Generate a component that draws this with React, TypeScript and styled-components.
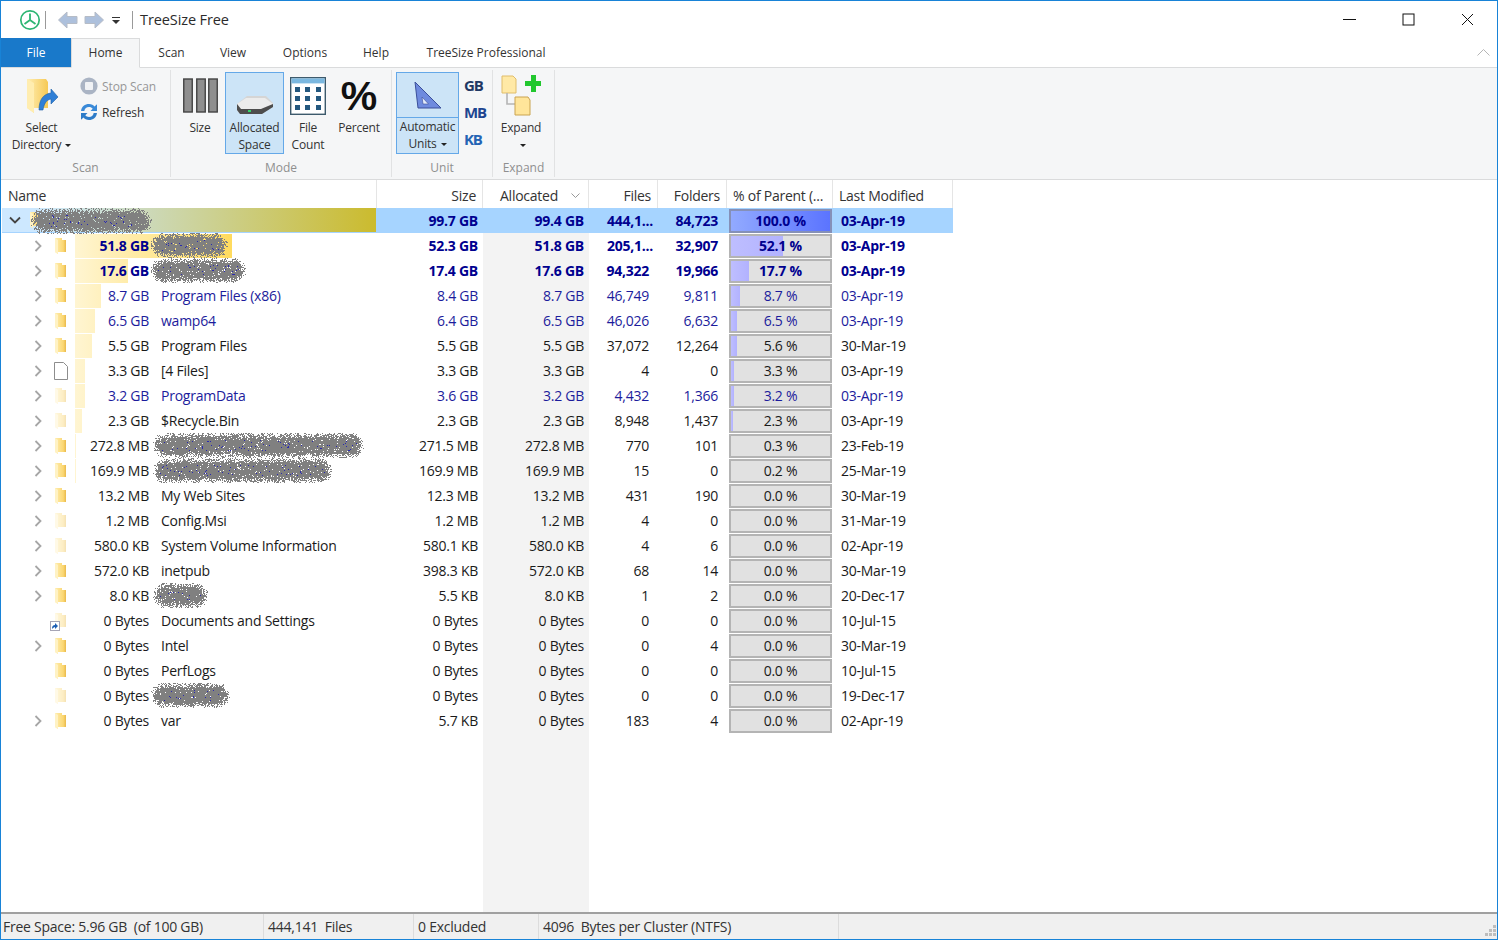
import * as React from 'react';
import styled, { createGlobalStyle } from 'styled-components';

const FONT = `"Open Sans", "Noto Sans", "Liberation Sans", sans-serif`;
const COLS = '375px 106px 106px 69px 69px 106px 120px';

interface IRow {
  size: string;
  name?: string;
  apparent: string;
  allocated: string;
  files: string;
  folders: string;
  pct: number;
  date: string;
  bar: number;
  bold?: boolean;
  recent?: boolean;
  faded?: boolean;
  noExpand?: boolean;
  kind?: 'folder' | 'file' | 'link';
  scribble?: [number, number];
}

const rows: IRow[] = [
  { size: '51.8 GB', apparent: '52.3 GB', allocated: '51.8 GB', files: '205,1...', folders: '32,907', pct: 52.1, date: '03-Apr-19', bar: 157, bold: true, recent: true, scribble: [148, 78] },
  { size: '17.6 GB', apparent: '17.4 GB', allocated: '17.6 GB', files: '94,322', folders: '19,966', pct: 17.7, date: '03-Apr-19', bar: 53, bold: true, recent: true, scribble: [148, 96] },
  { size: '8.7 GB', name: 'Program Files (x86)', apparent: '8.4 GB', allocated: '8.7 GB', files: '46,749', folders: '9,811', pct: 8.7, date: '03-Apr-19', bar: 26, recent: true },
  { size: '6.5 GB', name: 'wamp64', apparent: '6.4 GB', allocated: '6.5 GB', files: '46,026', folders: '6,632', pct: 6.5, date: '03-Apr-19', bar: 20, recent: true },
  { size: '5.5 GB', name: 'Program Files', apparent: '5.5 GB', allocated: '5.5 GB', files: '37,072', folders: '12,264', pct: 5.6, date: '30-Mar-19', bar: 17 },
  { size: '3.3 GB', name: '[4 Files]', apparent: '3.3 GB', allocated: '3.3 GB', files: '4', folders: '0', pct: 3.3, date: '03-Apr-19', bar: 10, kind: 'file' },
  { size: '3.2 GB', name: 'ProgramData', apparent: '3.6 GB', allocated: '3.2 GB', files: '4,432', folders: '1,366', pct: 3.2, date: '03-Apr-19', bar: 10, recent: true, faded: true },
  { size: '2.3 GB', name: '$Recycle.Bin', apparent: '2.3 GB', allocated: '2.3 GB', files: '8,948', folders: '1,437', pct: 2.3, date: '03-Apr-19', bar: 7, faded: true },
  { size: '272.8 MB', apparent: '271.5 MB', allocated: '272.8 MB', files: '770', folders: '101', pct: 0.3, date: '23-Feb-19', bar: 1, scribble: [150, 212] },
  { size: '169.9 MB', apparent: '169.9 MB', allocated: '169.9 MB', files: '15', folders: '0', pct: 0.2, date: '25-Mar-19', bar: 1, scribble: [150, 180] },
  { size: '13.2 MB', name: 'My Web Sites', apparent: '12.3 MB', allocated: '13.2 MB', files: '431', folders: '190', pct: 0, date: '30-Mar-19', bar: 0 },
  { size: '1.2 MB', name: 'Config.Msi', apparent: '1.2 MB', allocated: '1.2 MB', files: '4', folders: '0', pct: 0, date: '31-Mar-19', bar: 0, faded: true },
  { size: '580.0 KB', name: 'System Volume Information', apparent: '580.1 KB', allocated: '580.0 KB', files: '4', folders: '6', pct: 0, date: '02-Apr-19', bar: 0, faded: true },
  { size: '572.0 KB', name: 'inetpub', apparent: '398.3 KB', allocated: '572.0 KB', files: '68', folders: '14', pct: 0, date: '30-Mar-19', bar: 0 },
  { size: '8.0 KB', apparent: '5.5 KB', allocated: '8.0 KB', files: '1', folders: '2', pct: 0, date: '20-Dec-17', bar: 0, scribble: [150, 56] },
  { size: '0 Bytes', name: 'Documents and Settings', apparent: '0 Bytes', allocated: '0 Bytes', files: '0', folders: '0', pct: 0, date: '10-Jul-15', bar: 0, faded: true, noExpand: true, kind: 'link' },
  { size: '0 Bytes', name: 'Intel', apparent: '0 Bytes', allocated: '0 Bytes', files: '0', folders: '4', pct: 0, date: '30-Mar-19', bar: 0 },
  { size: '0 Bytes', name: 'PerfLogs', apparent: '0 Bytes', allocated: '0 Bytes', files: '0', folders: '0', pct: 0, date: '10-Jul-15', bar: 0, noExpand: true },
  { size: '0 Bytes', apparent: '0 Bytes', allocated: '0 Bytes', files: '0', folders: '0', pct: 0, date: '19-Dec-17', bar: 0, faded: true, noExpand: true, scribble: [148, 80] },
  { size: '0 Bytes', name: 'var', apparent: '5.7 KB', allocated: '0 Bytes', files: '183', folders: '4', pct: 0, date: '02-Apr-19', bar: 0 },
];

const GlobalStyle = createGlobalStyle`
  html, body { margin: 0; padding: 0; overflow: hidden; background: #fff; }
  * { box-sizing: border-box; }
`;

const Window = styled.div`
  width: 1498px;
  height: 940px;
  display: flex;
  flex-direction: column;
  border: 1px solid #1883d7;
  background: #fff;
  font-family: ${FONT};
  color: #1a1a1a;
`;

const TitleBar = styled.div`
  height: 37px;
  display: flex;
  align-items: center;
  padding-left: 18px;
  flex: none;
`;

const TitleSep = styled.span<{ $left: number }>`
  width: 1px;
  height: 18px;
  background: #9a9a9a;
  margin-left: ${p => p.$left}px;
`;

const TitleText = styled.div`
  font-size: 14.5px;
  margin-left: 7px;
  color: #2b2b2b;
  letter-spacing: -0.1px;
  flex: 1;
`;

const WinButton = styled.div`
  width: 59px;
  height: 37px;
  display: flex;
  align-items: center;
  justify-content: center;
`;

const TabRow = styled.div`
  height: 29px;
  display: flex;
  align-items: stretch;
  flex: none;
  position: relative;
  z-index: 1;
`;

const Tab = styled.div<{ $w: number; $active?: boolean; $file?: boolean }>`
  width: ${p => p.$w}px;
  display: flex;
  align-items: center;
  justify-content: center;
  font-size: 12px;
  padding-bottom: 1px;
  color: ${p => (p.$file ? '#fff' : '#333')};
  background: ${p => (p.$file ? '#1979ca' : p.$active ? '#f5f6f7' : 'transparent')};
  border: ${p => (p.$active ? '1px solid #dadbdc' : 'none')};
  border-bottom: ${p => (p.$active ? '1px solid #f5f6f7' : 'none')};
  margin-bottom: ${p => (p.$active ? '-1px' : '0')};
`;

const Collapse = styled.div`
  margin-left: auto;
  width: 28px;
  display: flex;
  align-items: center;
  justify-content: center;
`;

const Ribbon = styled.div`
  height: 113px;
  flex: none;
  display: flex;
  background: #f5f6f7;
  border-top: 1px solid #dadbdc;
  border-bottom: 1px solid #dadbdc;
`;

const Group = styled.div<{ $w: number }>`
  width: ${p => p.$w}px;
  display: flex;
  flex-direction: column;
  margin-top: 2px;
  margin-bottom: 2px;
  border-right: 1px solid #e1e2e3;
`;

const GroupBody = styled.div<{ $pad: number }>`
  flex: 1;
  display: flex;
  padding: 2px 0 0 ${p => p.$pad}px;
`;

const GroupLabel = styled.div`
  height: 18px;
  text-align: center;
  font-size: 12px;
  line-height: 17px;
  color: #8f8f8f;
`;

const LargeButton = styled.div<{ $w: number; $on?: boolean }>`
  width: ${p => p.$w}px;
  height: 82px;
  display: flex;
  flex-direction: column;
  align-items: center;
  border: 1px solid ${p => (p.$on ? '#64a8e8' : 'transparent')};
  background: ${p => (p.$on ? '#cce4f7' : 'transparent')};
`;

const IconSlot = styled.div<{ $divided?: boolean }>`
  height: ${p => (p.$divided ? 45 : 46)}px;
  width: 100%;
  flex: none;
  display: flex;
  align-items: center;
  justify-content: center;
  border-bottom: ${p => (p.$divided ? '1px solid #64a8e8' : 'none')};
`;

const LargeText = styled.div`
  font-size: 12px;
  line-height: 17px;
  text-align: center;
  color: #333;
  white-space: nowrap;
  letter-spacing: -0.2px;
`;

const Caret = styled.span`
  display: inline-block;
  width: 0;
  height: 0;
  margin-left: 4px;
  vertical-align: 2px;
  border-left: 3px solid transparent;
  border-right: 3px solid transparent;
  border-top: 3px solid #222;
`;

const SmallStack = styled.div`
  display: flex;
  flex-direction: column;
  gap: 4px;
  margin-left: 5px;
  padding-top: 3px;
`;

const SmallButton = styled.div<{ $off?: boolean }>`
  display: flex;
  align-items: center;
  gap: 4px;
  height: 22px;
  font-size: 12px;
  letter-spacing: -0.1px;
  color: ${p => (p.$off ? '#979797' : '#333')};
`;

const PercentGlyph = styled.span`
  font-family: "Liberation Sans", sans-serif;
  font-weight: 700;
  font-size: 41px;
  line-height: 46px;
  color: #111;
`;

const UnitStack = styled.div`
  display: flex;
  flex-direction: column;
  margin-left: 5px;
`;

const UnitLabel = styled.div<{ $color: string }>`
  height: 27px;
  font-size: 15px;
  line-height: 27px;
  font-weight: 700;
  letter-spacing: -1.1px;
  color: ${p => p.$color};
`;

const TreeArea = styled.div`
  flex: 1;
  min-height: 0;
  padding-left: 1px;
  background: linear-gradient(90deg, transparent 482px, #f3f3f3 482px, #f3f3f3 588px, transparent 588px);
`;

const HeaderRow = styled.div`
  display: grid;
  grid-template-columns: ${COLS};
  width: 951px;
  height: 28px;
  background: #fff;
`;

const HeaderCell = styled.div<{ $right?: boolean; $pad: number }>`
  display: flex;
  align-items: center;
  justify-content: ${p => (p.$right ? 'flex-end' : 'space-between')};
  font-size: 14px;
  color: #333;
  letter-spacing: -0.25px;
  padding: 2px ${p => (p.$right ? 6 : 8)}px 0 ${p => p.$pad}px;
  border-right: 1px solid #e5e5e5;
  white-space: nowrap;
`;

const Row = styled.div<{ $selected?: boolean; $bold?: boolean; $recent?: boolean }>`
  display: grid;
  grid-template-columns: ${COLS};
  width: 951px;
  height: 25px;
  font-size: 14px;
  letter-spacing: -0.25px;
  font-weight: ${p => (p.$bold ? 700 : 400)};
  color: ${p => (p.$bold ? '#00008f' : p.$recent ? '#1c1c9c' : '#1a1a1a')};
  background: ${p => (p.$selected ? '#a6d4ff' : 'transparent')};
`;

const NameCell = styled.div<{ $root?: boolean }>`
  position: relative;
  display: flex;
  align-items: center;
  padding-left: ${p => (p.$root ? 7 : 30)}px;
  height: ${p => (p.$root ? 24 : 25)}px;
  margin-right: ${p => (p.$root ? 1 : 0)}px;
  background: ${p => (p.$root ? 'linear-gradient(90deg, #cde8ff 0%, #cde8ff 8%, #cbbb2e 100%)' : 'none')};
`;

const Expander = styled.div`
  width: 20px;
  flex: none;
  display: flex;
  align-items: center;
`;

const FolderSlot = styled.div`
  width: 14px;
  margin-left: 2px;
  flex: none;
  display: flex;
  align-items: center;
  position: relative;
`;

const LinkBadge = styled.div`
  position: absolute;
  left: -4px;
  top: 9px;
  width: 10px;
  height: 10px;
  background: #fff;
  border: 1px solid #a5a5b5;
  display: flex;
  align-items: center;
  justify-content: center;
`;

const SizeBox = styled.div`
  position: relative;
  width: 74px;
  height: 24px;
  margin-left: 7px;
  flex: none;
  display: flex;
  align-items: center;
  justify-content: flex-end;
`;

const SizeBar = styled.div`
  position: absolute;
  left: 0;
  top: 0;
  bottom: 0;
  background: linear-gradient(90deg, #fff5d2, #ffdb5e) 0 0 / 157px 100% no-repeat;
`;

const SizeText = styled.span`
  position: relative;
  white-space: nowrap;
`;

const NameText = styled.span`
  margin-left: 12px;
  white-space: nowrap;
`;

const ScribbleBox = styled.svg<{ $x: number }>`
  position: absolute;
  left: ${p => p.$x}px;
  top: -1px;
  z-index: 2;
  shape-rendering: crispEdges;
`;

const NumCell = styled.div<{ $pad: number }>`
  display: flex;
  align-items: center;
  justify-content: flex-end;
  padding-right: ${p => p.$pad}px;
  white-space: nowrap;
`;

const GaugeCell = styled.div`
  display: flex;
  align-items: center;
  padding: 0 1px 0 2px;
`;

const Gauge = styled.div<{ $root?: boolean }>`
  position: relative;
  width: 100%;
  height: 24px;
  display: flex;
  align-items: center;
  justify-content: center;
  border: 2px solid ${p => (p.$root ? '#8590b8' : '#b4b4b4')};
  background: #e1e1e1;
`;

const GaugeFill = styled.div<{ $root?: boolean }>`
  position: absolute;
  left: 0;
  top: 0;
  bottom: 0;
  background: ${p => (p.$root ? 'linear-gradient(90deg, #92aaff, #5b74ff)' : 'linear-gradient(90deg, #bebeff, #b2b2ff)')};
`;

const GaugeText = styled.span`
  position: relative;
`;

const DateCell = styled.div`
  display: flex;
  align-items: center;
  padding-left: 8px;
`;

const StatusBar = styled.div`
  height: 27px;
  flex: none;
  display: flex;
  align-items: center;
  background: #f0f0f0;
  border-top: 2px solid #a0a0a0;
  font-size: 14px;
  letter-spacing: -0.25px;
  color: #333;
`;

const StatusCell = styled.div<{ $w: number }>`
  width: ${p => p.$w}px;
  height: 100%;
  padding-left: ${p => (p.$w === 263 ? 2 : 4)}px;
  display: flex;
  align-items: center;
  white-space: pre;
  border-right: 1px solid #dcdcdc;
`;

const Grip = styled.svg`
  margin-left: auto;
  margin-top: 8px;
  align-self: flex-end;
`;

// dithered grey capsule, like the smudges over the redacted names
const noise = (w: number, h: number, seed: number) => {
  let s = seed;
  const rnd = () => {
    s = (s * 16807) % 2147483647;
    return s / 2147483647;
  };
  let grey = '';
  let blue = '';
  const r = h / 2;
  for (let y = 0; y < h; y++) {
    for (let x = 0; x < w; x++) {
      const dx = Math.max(0, Math.abs(x - w / 2) - (w / 2 - r));
      const d = Math.sqrt(dx * dx + (y - r) * (y - r)) / r;
      const p = d < 0.55 ? 0.93 : d < 1 ? 0.93 * (1 - (d - 0.55) / 0.5) : 0;
      const v = rnd();
      if (v < p) grey += `M${x} ${y}h1v1h-1z`;
      else if (d < 0.45 && v > 0.97) blue += `M${x} ${y}h1v1h-1z`;
    }
  }
  return { grey, blue };
};

const Scribble = ({ x, w, h = 26, seed }: { x: number; w: number; h?: number; seed: number }) => {
  const { grey, blue } = noise(w, h, seed);
  return (
    <ScribbleBox $x={x} width={w} height={h} viewBox={`0 0 ${w} ${h}`}>
      <path d={grey} fill='#808080' />
      <path d={blue} fill='#2a2ab0' />
    </ScribbleBox>
  );
};

const Chevron = ({ open }: { open?: boolean }) => (
  <svg width='12' height='12' viewBox='0 0 12 12'>
    {open
      ? <path d='M1 3.5 L6 8.5 L11 3.5' fill='none' stroke='#444' strokeWidth='1.8' />
      : <path d='M3.5 1 L8.5 6 L3.5 11' fill='none' stroke='#a6a6a6' strokeWidth='1.8' />}
  </svg>
);

const TreeFolder = ({ faded }: { faded?: boolean }) => (
  <svg width='13' height='18' viewBox='0 0 13 18' opacity={faded ? 0.42 : 1}>
    <defs>
      <linearGradient id='tf' x1='0' x2='1' y1='0' y2='0'>
        <stop offset='0' stopColor='#ffeeb0' />
        <stop offset='0.75' stopColor='#fbd773' />
        <stop offset='1' stopColor='#e9b94a' />
      </linearGradient>
    </defs>
    <path d='M1 1 L8 1 L8 3 L12 3 L12 15 L4 15 L4 17 L1 15 Z' fill='url(#tf)' />
    <path d='M1 1 L4 3 L4 17 L1 15 Z' fill='#fff2c4' />
  </svg>
);

const FileIcon = () => (
  <svg width='14' height='18' viewBox='0 0 14 18'>
    <path d='M0.5 0.5 H9.5 L13.5 4.5 V17.5 H0.5 Z' fill='#fff' stroke='#8d8d8d' />
  </svg>
);

const Logo = () => (
  <svg width='22' height='22' viewBox='0 0 22 22'>
    <circle cx='11' cy='11' r='9.2' fill='#fff' stroke='#2db573' strokeWidth='1.7' />
    <path d='M11 11 V4.5 M11 11 L5.5 15 M11 11 L16.5 15' stroke='#2db573' strokeWidth='1.8' fill='none' />
  </svg>
);

const NavArrow = ({ flip, left }: { flip?: boolean; left: number }) => (
  <svg width='20' height='18' viewBox='0 0 20 18' style={{ marginLeft: left, transform: flip ? 'scaleX(-1)' : undefined }}>
    <path d='M0.5 9 L9 1 V5.5 H19 V12.5 H9 V17 Z' fill='#adc0dc' stroke='#b6bcc6' />
  </svg>
);

const Customize = () => (
  <svg width='8' height='8' viewBox='0 0 8 8' style={{ marginLeft: 8 }}>
    <rect x='0' y='1' width='8' height='1' fill='#333' />
    <path d='M0 4 H8 L4 8 Z' fill='#333' />
  </svg>
);

const SelectDirIcon = () => (
  <svg width='34' height='36' viewBox='0 0 34 36'>
    <defs>
      <linearGradient id='sd' x1='0' x2='1' y1='0' y2='0'>
        <stop offset='0' stopColor='#ffeeb3' />
        <stop offset='1' stopColor='#f6c955' />
      </linearGradient>
    </defs>
    <path d='M2 1 L21 1 L23 4 L23 30 L9 30 L9 35 L2 30 Z' fill='url(#sd)' />
    <path d='M2 1 L9 5 L9 35 L2 30 Z' fill='#ffedb0' />
    <path d='M14 32 C14 22 18 16 26 15 L26 11 L33 19 L26 26 L26 21 C21 22 19 26 18 32 Z' fill='#2f7fd6' stroke='#1b5fa8' strokeWidth='0.6' />
  </svg>
);

const StopIcon = () => (
  <svg width='18' height='18' viewBox='0 0 18 18'>
    <circle cx='9' cy='9' r='8.6' fill='#aab4c4' />
    <rect x='5' y='5' width='8' height='8' rx='1' fill='#f0f2f5' />
  </svg>
);

const RefreshIcon = () => (
  <svg width='18' height='18' viewBox='0 0 18 18'>
    <path d='M1 8 C1.5 3.5 5 1 9 1 C11.5 1 13.5 2 14.5 3.5 L17 1.2 V8 H10.5 L12.7 5.7 C11.8 4.6 10.5 4 9 4 C6.5 4 4.8 5.6 4.3 8 Z' fill='#3a8ad8' />
    <path d='M17 10 C16.5 14.5 13 17 9 17 C6.5 17 4.5 16 3.5 14.5 L1 16.8 V10 H7.5 L5.3 12.3 C6.2 13.4 7.5 14 9 14 C11.5 14 13.2 12.4 13.7 10 Z' fill='#2e7cc8' />
  </svg>
);

const BarsIcon = () => (
  <svg width='35' height='36' viewBox='0 0 35 36'>
    {[0, 13, 25].map(x => <rect key={x} x={x + 0.75} y='1' width='8.5' height='33' fill='#8f8f8f' stroke='#444' strokeWidth='1.4' />)}
  </svg>
);

const DriveIcon = () => (
  <svg width='38' height='44' viewBox='0 0 38 44'>
    <path d='M1 30 L11 22 H30 L37 29 L37 33 L26 39 H3 L1 36 Z' fill='#d5d5d5' />
    <path d='M1 30 L10 24 H29 L37 30 L25 35 H5 Z' fill='#ececec' />
    <path d='M1 30 L5 35 H25 L37 30 V33 L26 40 H4 L1 36 Z' fill='#4d4d4d' />
    <rect x='12' y='36' width='3' height='2' fill='#34d46a' />
  </svg>
);

const CountIcon = () => (
  <svg width='36' height='38' viewBox='0 0 36 38'>
    <rect x='0.7' y='0.7' width='34.6' height='36.6' fill='#fff' stroke='#3d5a6c' strokeWidth='1.4' />
    <rect x='1.4' y='1.4' width='33.2' height='5' fill='#7bb8e0' />
    {[10, 19, 28].flatMap(y => [5, 15, 26].map(x => <rect key={`${x}-${y}`} x={x} y={y} width='5' height='5' fill='#24587f' />))}
  </svg>
);

const SetSquareIcon = () => (
  <svg width='28' height='28' viewBox='0 0 28 28'>
    <path d='M1 1 L27 27 H4 Z' fill='#6e8ade' stroke='#3a4f9a' strokeWidth='1' />
    <path d='M8 16 L14.5 23 H9 Z' fill='#e4ecfa' stroke='#3a4f9a' strokeWidth='0.6' />
  </svg>
);

const ExpandIcon = () => (
  <svg width='40' height='42' viewBox='0 0 40 42'>
    <path d='M1 1 H12 L15 4 V18 H1 Z' fill='#ffe9a6' stroke='#e0bd6a' />
    <path d='M6 18 V29 H14' fill='none' stroke='#b5b5b5' strokeWidth='1.6' />
    <path d='M14 22 H27 L29 25 V40 H14 Z' fill='#ffe59a' stroke='#c9a350' />
    <path d='M24 6 H30 V0 H35 V6 H40 V11 H35 V17 H30 V11 H24 Z' fill='#21c72e' />
  </svg>
);

const TreeRow = ({ row, index }: { row: IRow; index: number }) => (
  <Row $bold={row.bold} $recent={row.recent}>
    <NameCell>
      <Expander>{!row.noExpand && <Chevron />}</Expander>
      <FolderSlot>
        {row.kind === 'file' ? <FileIcon /> : <TreeFolder faded={row.faded} />}
        {row.kind === 'link' && (
          <LinkBadge>
            <svg width='6' height='6' viewBox='0 0 6 6'><path d='M0 6 C0 3 1 2 3 2 V0 L6 3 L3 6 V4 C2 4 1 5 0 6 Z' fill='#1c5fb4' /></svg>
          </LinkBadge>
        )}
      </FolderSlot>
      <SizeBox>
        {row.bar > 0 && <SizeBar style={{ width: row.bar }} />}
        <SizeText>{row.size}</SizeText>
      </SizeBox>
      {row.name && <NameText>{row.name}</NameText>}
      {row.scribble && <Scribble x={row.scribble[0]} w={row.scribble[1]} seed={1013 + index * 97} />}
    </NameCell>
    <NumCell $pad={5}>{row.apparent}</NumCell>
    <NumCell $pad={5}>{row.allocated}</NumCell>
    <NumCell $pad={row.files.endsWith('...') ? 5 : 9}>{row.files}</NumCell>
    <NumCell $pad={9}>{row.folders}</NumCell>
    <GaugeCell>
      <Gauge>
        <GaugeFill style={{ width: `${row.pct}%` }} />
        <GaugeText>{row.pct.toFixed(1)} %</GaugeText>
      </Gauge>
    </GaugeCell>
    <DateCell>{row.date}</DateCell>
  </Row>
);

const App = () => (
  <Window>
    <GlobalStyle />
    <TitleBar>
      <Logo />
      <TitleSep $left={4} />
      <NavArrow left={12} />
      <NavArrow left={6} flip />
      <Customize />
      <TitleSep $left={12} />
      <TitleText>TreeSize Free</TitleText>
      <WinButton><svg width='13' height='13' viewBox='0 0 13 13'><path d='M0 6.5 H13' stroke='#111' /></svg></WinButton>
      <WinButton><svg width='13' height='13' viewBox='0 0 13 13'><rect x='1' y='1' width='11' height='11' fill='none' stroke='#111' /></svg></WinButton>
      <WinButton><svg width='13' height='13' viewBox='0 0 13 13'><path d='M1 1 L12 12 M12 1 L1 12' stroke='#111' /></svg></WinButton>
    </TitleBar>
    <TabRow>
      <Tab $w={70} $file>File</Tab>
      <Tab $w={69} $active>Home</Tab>
      <Tab $w={63}>Scan</Tab>
      <Tab $w={60}>View</Tab>
      <Tab $w={84}>Options</Tab>
      <Tab $w={58}>Help</Tab>
      <Tab $w={162}>TreeSize Professional</Tab>
      <Collapse>
        <svg width='13' height='7' viewBox='0 0 13 7'><path d='M0.5 6.5 L6.5 0.5 L12.5 6.5' fill='none' stroke='#b5b5b5' /></svg>
      </Collapse>
    </TabRow>
    <Ribbon>
      <Group $w={170}>
        <GroupBody $pad={7}>
          <LargeButton $w={67}>
            <IconSlot><SelectDirIcon /></IconSlot>
            <LargeText>Select<br />Directory<Caret /></LargeText>
          </LargeButton>
          <SmallStack>
            <SmallButton $off><StopIcon />Stop Scan</SmallButton>
            <SmallButton><RefreshIcon />Refresh</SmallButton>
          </SmallStack>
        </GroupBody>
        <GroupLabel>Scan</GroupLabel>
      </Group>
      <Group $w={221}>
        <GroupBody $pad={4}>
          <LargeButton $w={50}>
            <IconSlot><BarsIcon /></IconSlot>
            <LargeText>Size</LargeText>
          </LargeButton>
          <LargeButton $w={59} $on>
            <IconSlot><DriveIcon /></IconSlot>
            <LargeText>Allocated<br />Space</LargeText>
          </LargeButton>
          <LargeButton $w={48}>
            <IconSlot><CountIcon /></IconSlot>
            <LargeText>File<br />Count</LargeText>
          </LargeButton>
          <LargeButton $w={54}>
            <IconSlot><PercentGlyph>%</PercentGlyph></IconSlot>
            <LargeText>Percent</LargeText>
          </LargeButton>
        </GroupBody>
        <GroupLabel>Mode</GroupLabel>
      </Group>
      <Group $w={101}>
        <GroupBody $pad={4}>
          <LargeButton $w={63} $on>
            <IconSlot $divided><SetSquareIcon /></IconSlot>
            <LargeText>Automatic<br />Units<Caret /></LargeText>
          </LargeButton>
          <UnitStack>
            <UnitLabel $color='#1f3864'>GB</UnitLabel>
            <UnitLabel $color='#1e4590'>MB</UnitLabel>
            <UnitLabel $color='#2464b4'>KB</UnitLabel>
          </UnitStack>
        </GroupBody>
        <GroupLabel>Unit</GroupLabel>
      </Group>
      <Group $w={62}>
        <GroupBody $pad={0}>
          <LargeButton $w={56}>
            <IconSlot><ExpandIcon /></IconSlot>
            <LargeText>Expand<br /><Caret /></LargeText>
          </LargeButton>
        </GroupBody>
        <GroupLabel>Expand</GroupLabel>
      </Group>
    </Ribbon>
    <TreeArea>
      <HeaderRow>
        <HeaderCell $pad={6}>Name</HeaderCell>
        <HeaderCell $pad={0} $right>Size</HeaderCell>
        <HeaderCell $pad={17}>
          Allocated
          <svg width='9' height='5' viewBox='0 0 9 5'><path d='M0.5 0.5 L4.5 4.5 L8.5 0.5' fill='none' stroke='#999' /></svg>
        </HeaderCell>
        <HeaderCell $pad={0} $right>Files</HeaderCell>
        <HeaderCell $pad={0} $right>Folders</HeaderCell>
        <HeaderCell $pad={6}>% of Parent (...</HeaderCell>
        <HeaderCell $pad={6}>Last Modified</HeaderCell>
      </HeaderRow>
      <Row $selected $bold>
        <NameCell $root>
          <Expander><Chevron open /></Expander>
          <TreeFolder />
          <Scribble x={28} w={122} h={27} seed={4242} />
        </NameCell>
        <NumCell $pad={5}>99.7 GB</NumCell>
        <NumCell $pad={5}>99.4 GB</NumCell>
        <NumCell $pad={5}>444,1...</NumCell>
        <NumCell $pad={9}>84,723</NumCell>
        <GaugeCell>
          <Gauge $root>
            <GaugeFill $root style={{ width: '100%' }} />
            <GaugeText>100.0 %</GaugeText>
          </Gauge>
        </GaugeCell>
        <DateCell>03-Apr-19</DateCell>
      </Row>
      {rows.map((row, i) => <TreeRow key={i} row={row} index={i} />)}
    </TreeArea>
    <StatusBar>
      <StatusCell $w={263}>Free Space: 5.96 GB  (of 100 GB)</StatusCell>
      <StatusCell $w={150}>444,141  Files</StatusCell>
      <StatusCell $w={125}>0 Excluded</StatusCell>
      <StatusCell $w={300}>4096  Bytes per Cluster (NTFS)</StatusCell>
      <Grip width='13' height='14' viewBox='0 0 13 14'>
        {[[9, 0], [5, 4], [9, 4], [1, 8], [5, 8], [9, 8]].map(([x, y]) => <rect key={`${x}-${y}`} x={x} y={y} width='3' height='3' fill='#bdbdbd' />)}
      </Grip>
    </StatusBar>
  </Window>
);

export default App;
